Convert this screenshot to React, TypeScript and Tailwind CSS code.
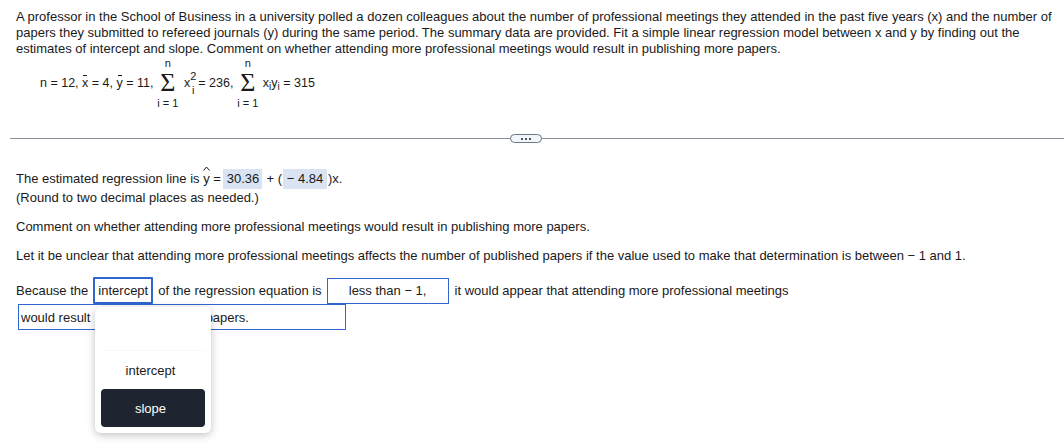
const Sigma = () => (
  <span className="inline-flex flex-col items-center w-[22px] text-[11px] leading-[13px]">
    <span className="mb-[2px]">n</span>
    <span className="text-[26px] leading-[22px] font-['Liberation_Serif']">Σ</span>
    <span className="mt-[3px]">i = 1</span>
  </span>
);

const Bar = ({ children }: { children: React.ReactNode }) => (
  <span className="inline-flex flex-col items-center">
    <span className="w-[4px] h-[1px] mb-[-1px] bg-[#1a1a1a]" />
    <span>{children}</span>
  </span>
);

const Answer = ({ width, children }: { width: string; children: React.ReactNode }) => (
  <span className={`inline-flex items-center justify-center h-[20px] bg-[#d9e3f2] ${width}`}>{children}</span>
);

const App = () => {
  return (
    <div className="relative w-[1064px] h-[448px] overflow-hidden bg-white text-[13px] leading-[16px] text-[#1a1a1a] font-['Liberation_Sans',Arial,sans-serif]">
      <div className="px-[16px] pt-[9px]">
        <p className="whitespace-nowrap">
          A professor in the School of Business in a university polled a dozen colleagues about the number of professional meetings they attended in the past five years (x) and the number of
          <br />
          papers they submitted to refereed journals (y) during the same period. The summary data are provided. Fit a simple linear regression model between x and y by finding out the
          <br />
          estimates of intercept and slope. Comment on whether attending more professional meetings would result in publishing more papers.
        </p>
        <div className="flex items-center h-[44px] pl-[24px] mt-[4px] whitespace-pre text-[12.5px]">
          <span>n = 12, </span>
          <Bar>x</Bar>
          <span> = 4, </span>
          <Bar>y</Bar>
          <span> = 11, </span>
          <Sigma />
          <span className="ml-[5px]">x</span>
          <span className="inline-flex flex-col items-center mr-[2px] text-[11px] leading-[14px]">
            <span>2</span>
            <span>i</span>
          </span>
          <span>= 236, </span>
          <Sigma />
          <span className="ml-[4px]">x</span>
          <span className="text-[10px] relative top-[4px]">i</span>
          <span>y</span>
          <span className="text-[10px] relative top-[4px]">i</span>
          <span> = 315</span>
        </div>
      </div>

      <div className="relative mt-[33px] h-[1px] ml-[10px] bg-[#8a9099]">
        <div className="absolute left-[500px] top-[-4px] flex items-center justify-center gap-[2px] w-[32px] h-[9px] rounded-full border border-[#6b7785] bg-[#f2f5f9]">
          <span className="w-[2px] h-[2px] bg-[#4a5563]" />
          <span className="w-[2px] h-[2px] bg-[#4a5563]" />
          <span className="w-[2px] h-[2px] bg-[#4a5563]" />
        </div>
      </div>

      <div className="px-[16px] pt-[30px]">
        <div className="flex items-center h-[20px] whitespace-pre">
          <span>The estimated regression line is </span>
          <span className="relative">
            y
            <svg className="absolute left-[0px] top-[-5px]" width="7" height="5" viewBox="0 0 7 5" fill="none" stroke="#1a1a1a">
              <path d="M0.5 4.5L3.5 1L6.5 4.5" />
            </svg>
          </span>
          <span className="mr-[-1px]"> = </span>
          <Answer width="w-[39px]">30.36</Answer>
          <span className="ml-[4px] mr-[1px]">+ (</span>
          <Answer width="w-[44px]">− 4.84</Answer>
          <span className="ml-[1px]">)x.</span>
        </div>
        <p className="mt-[1px]">(Round to two decimal places as needed.)</p>
        <p className="mt-[13px]">Comment on whether attending more professional meetings would result in publishing more papers.</p>
        <p className="mt-[13px] whitespace-nowrap">Let it be unclear that attending more professional meetings affects the number of published papers if the value used to make that determination is between − 1 and 1.</p>

        <div className="flex items-center mt-[13px] h-[27px] whitespace-pre">
          <span>Because the</span>
          <span className="flex items-center justify-center h-[27px] w-[60px] ml-[5px] border-2 border-[#2f66d0] rounded-[1px]">intercept</span>
          <span className="ml-[5px]">of the regression equation is</span>
          <span className="flex items-center justify-center h-[26px] w-[122px] ml-[5px] border border-[#2f66d0]">less than − 1,</span>
          <span className="ml-[6px]">it would appear that attending more professional meetings</span>
        </div>
        <div className="flex items-center justify-between w-[328px] h-[26px] ml-[2px] pl-[2px] pt-[1px] border border-[#2f66d0]">
          <span>would result</span>
          <span className="mr-[96px]">papers.</span>
        </div>
      </div>

      <div className="absolute left-[95px] top-[307px] w-[116px] h-[126px] rounded-[6px] bg-white shadow-[0_2px_8px_rgba(0,0,0,0.25)] px-[6px]">
        <div className="h-[44px] border-b border-[#f8f8f8]" />
        <div className="flex items-center justify-center w-[104px] h-[38px] pr-[5px] pt-[1px]">intercept</div>
        <div className="flex items-center justify-center w-[104px] h-[38px] pr-[5px] pt-[1px] rounded-[4px] bg-[#1e2530] text-white font-medium">slope</div>
      </div>
    </div>
  );
};

export default App;
